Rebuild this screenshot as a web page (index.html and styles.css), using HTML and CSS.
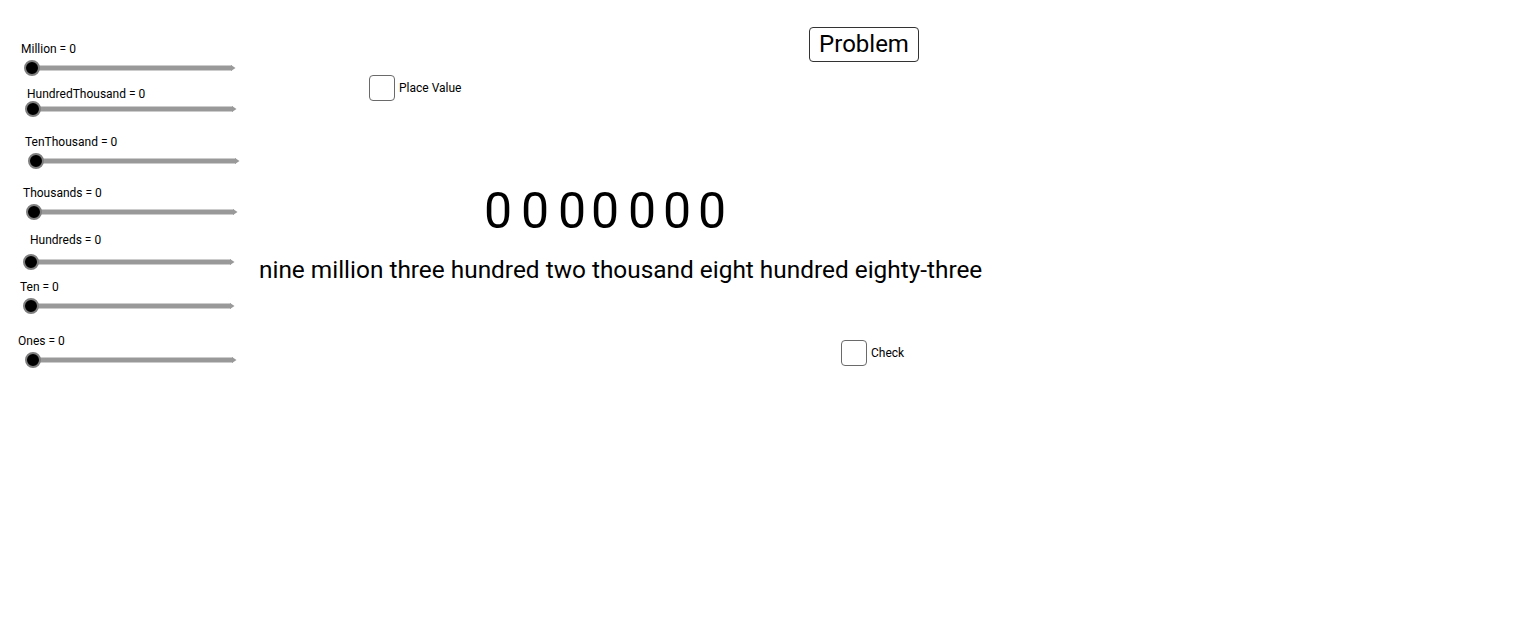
FILE: index.html
```html
<!DOCTYPE html>
<html lang="en">
<head>
<meta charset="utf-8">
<title>Place Value</title>
<link rel="stylesheet" href="styles.css">
</head>
<body>
<main class="canvas">
  <span class="lbl l1">Million = 0</span>
  <svg class="slider s1" width="213" height="16" viewBox="0 0 213 16"><line x1="8" y1="8" x2="208" y2="8" class="trk"/><polygon points="207,5 211.5,8 207,11" class="tip"/><circle cx="8" cy="8" r="7" class="knob"/></svg>

  <span class="lbl l2">HundredThousand = 0</span>
  <svg class="slider s2" width="213" height="16" viewBox="0 0 213 16"><line x1="8" y1="8" x2="208" y2="8" class="trk"/><polygon points="207,5 211.5,8 207,11" class="tip"/><circle cx="8" cy="8" r="7" class="knob"/></svg>

  <span class="lbl l3">TenThousand = 0</span>
  <svg class="slider s3" width="213" height="16" viewBox="0 0 213 16"><line x1="8" y1="8" x2="208" y2="8" class="trk"/><polygon points="207,5 211.5,8 207,11" class="tip"/><circle cx="8" cy="8" r="7" class="knob"/></svg>

  <span class="lbl l4">Thousands = 0</span>
  <svg class="slider s4" width="213" height="16" viewBox="0 0 213 16"><line x1="8" y1="8" x2="208" y2="8" class="trk"/><polygon points="207,5 211.5,8 207,11" class="tip"/><circle cx="8" cy="8" r="7" class="knob"/></svg>

  <span class="lbl l5">Hundreds = 0</span>
  <svg class="slider s5" width="213" height="16" viewBox="0 0 213 16"><line x1="8" y1="8" x2="208" y2="8" class="trk"/><polygon points="207,5 211.5,8 207,11" class="tip"/><circle cx="8" cy="8" r="7" class="knob"/></svg>

  <span class="lbl l6">Ten = 0</span>
  <svg class="slider s6" width="213" height="16" viewBox="0 0 213 16"><line x1="8" y1="8" x2="208" y2="8" class="trk"/><polygon points="207,5 211.5,8 207,11" class="tip"/><circle cx="8" cy="8" r="7" class="knob"/></svg>

  <span class="lbl l7">Ones = 0</span>
  <svg class="slider s7" width="213" height="16" viewBox="0 0 213 16"><line x1="8" y1="8" x2="208" y2="8" class="trk"/><polygon points="207,5 211.5,8 207,11" class="tip"/><circle cx="8" cy="8" r="7" class="knob"/></svg>

  <label class="check cb-place"><span class="box"></span><span class="cb-text">Place Value</span></label>
  <label class="check cb-check"><span class="box"></span><span class="cb-text">Check</span></label>

  <button class="problem" type="button">Problem</button>

  <span class="digit d1">0</span>
  <span class="digit d2">0</span>
  <span class="digit d3">0</span>
  <span class="digit d4">0</span>
  <span class="digit d5">0</span>
  <span class="digit d6">0</span>
  <span class="digit d7">0</span>

  <p class="words">nine million three hundred two thousand eight hundred eighty-three</p>
</main>
</body>
</html>
```

FILE: styles.css
```css
html, body {
  margin: 0;
  padding: 0;
  background: #ffffff;
}

body {
  font-family: Roboto, "Liberation Sans", sans-serif;
  color: #000;
}

.canvas {
  position: relative;
  width: 1518px;
  height: 640px;
  overflow: hidden;
}

/* slider labels */
.lbl {
  position: absolute;
  font-size: 12px;
  line-height: 14px;
  white-space: nowrap;
}
.l1 { left: 21px; top: 42px; }
.l2 { left: 27px; top: 87px; }
.l3 { left: 25px; top: 135px; }
.l4 { left: 23px; top: 186px; }
.l5 { left: 30px; top: 233px; }
.l6 { left: 20px; top: 280px; }
.l7 { left: 18px; top: 334px; }

/* slider tracks */
.slider {
  position: absolute;
  overflow: visible;
}
.s1 { left: 24px; top: 60px; }
.s2 { left: 25px; top: 101px; }
.s3 { left: 28px; top: 153px; }
.s4 { left: 26px; top: 204px; }
.s5 { left: 23px; top: 254px; }
.s6 { left: 23px; top: 298px; }
.s7 { left: 25px; top: 352px; }

.trk {
  stroke: #999999;
  stroke-width: 5;
}
.tip {
  fill: #999999;
}
.knob {
  fill: #000000;
  stroke: #7f7f7f;
  stroke-width: 2;
}

/* checkboxes */
.check {
  position: absolute;
  display: flex;
  align-items: center;
  gap: 4px;
}
.cb-place { left: 369px; top: 75px; }
.cb-check { left: 841px; top: 340px; }

.box {
  width: 24px;
  height: 24px;
  border: 1px solid #6a6a6a;
  border-radius: 4px;
  background: #fff;
}
.cb-text {
  font-size: 12px;
  line-height: 14px;
}

/* button */
.problem {
  position: absolute;
  left: 809px;
  top: 27px;
  width: 110px;
  height: 35px;
  margin: 0;
  padding: 0;
  background: #fff;
  border: 1px solid #333333;
  border-radius: 4px;
  font-family: Roboto, "Liberation Sans", sans-serif;
  font-size: 24px;
  line-height: 33px;
  color: #000;
}

/* big digits */
.digit {
  position: absolute;
  top: 186px;
  font-size: 50px;
  line-height: 50px;
}
.d1 { left: 484px; }
.d2 { left: 521px; }
.d3 { left: 558px; }
.d4 { left: 591px; }
.d5 { left: 628px; }
.d6 { left: 663px; }
.d7 { left: 698px; }

.words {
  position: absolute;
  left: 259px;
  top: 255px;
  margin: 0;
  font-size: 24.4px;
  line-height: 30px;
  white-space: nowrap;
}
```
